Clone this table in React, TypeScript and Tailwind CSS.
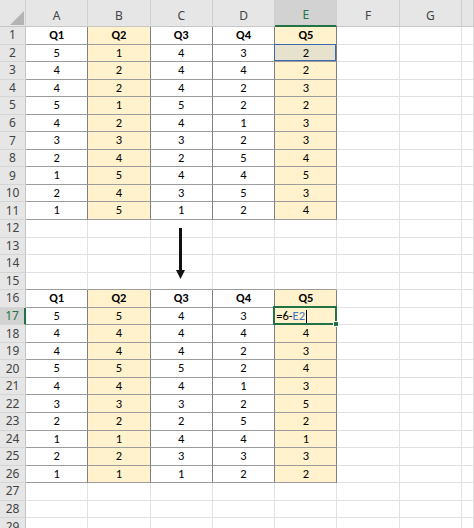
import React from 'react'

const cols = ['A', 'B', 'C', 'D', 'E', 'F', 'G', '']

// top table rows 1-11, bottom table rows 16-26
const top = [
    ['Q1', 'Q2', 'Q3', 'Q4', 'Q5'],
    ['5', '1', '4', '3', '2'],
    ['4', '2', '4', '4', '2'],
    ['4', '2', '4', '2', '3'],
    ['5', '1', '5', '2', '2'],
    ['4', '2', '4', '1', '3'],
    ['3', '3', '3', '2', '3'],
    ['2', '4', '2', '5', '4'],
    ['1', '5', '4', '4', '5'],
    ['2', '4', '3', '5', '3'],
    ['1', '5', '1', '2', '4'],
]

const bottom = [
    ['Q1', 'Q2', 'Q3', 'Q4', 'Q5'],
    ['5', '5', '4', '3', ''],
    ['4', '4', '4', '4', '4'],
    ['4', '4', '4', '2', '3'],
    ['5', '5', '5', '2', '4'],
    ['4', '4', '4', '1', '3'],
    ['3', '3', '3', '2', '5'],
    ['2', '2', '2', '5', '2'],
    ['1', '1', '4', '4', '1'],
    ['2', '2', '3', '3', '3'],
    ['1', '1', '1', '2', '2'],
]

const inTable = (r: number, c: number) =>
    c <= 4 && ((r >= 1 && r <= 11) || (r >= 16 && r <= 26))

const valueAt = (r: number, c: number) => {
    if (c > 4) return ''
    if (r >= 1 && r <= 11) return top[r - 1][c]
    if (r >= 16 && r <= 26) return bottom[r - 16][c]
    return ''
}

const gridCols = 'grid grid-cols-[26px_repeat(7,62.3px)_1fr] grid-rows-[100%]'

const Cell = ({ r, c }: { r: number; c: number }) => {
    const t = inTable(r, c)
    const right = t ? 'border-r-[#808080]' : 'border-r-[#e1e1e1]'
    const below = t || inTable(r + 1, c) ? 'border-b-[#9c9c9c]' : 'border-b-[#e1e1e1]'
    const fill = t && (c === 1 || c === 4) ? 'bg-[#fff2cc]' : 'bg-white'
    const bold = r === 1 || r === 16 ? 'font-bold' : ''
    const isE2 = r === 2 && c === 4
    const isE17 = r === 17 && c === 4

    return (
        <div
            className={`relative min-h-0 flex items-center justify-center border-r border-b ${right} ${below} ${isE2 ? 'bg-[#e7e2ce]' : fill} ${bold} text-[12.5px] leading-none text-black`}
        >
            {isE17 ? (
                <span className="absolute left-px top-0 bottom-0 flex items-center">
                    <span>=6-</span>
                    <span className="text-[#4472c4]">E2</span>
                    <span className="ml-px w-px h-[13px] bg-black" />
                </span>
            ) : (
                <span>{valueAt(r, c)}</span>
            )}
            {isE2 && (
                <div className="absolute -left-px -top-px right-0 bottom-0 border border-[#3e68ad] z-10" />
            )}
            {isE17 && (
                <>
                    <div className="absolute -left-[2px] -top-[2px] -right-px -bottom-px border-2 border-[#217346] z-10" />
                    <div className="absolute -right-[3px] -bottom-[3px] w-[6px] h-[6px] bg-[#217346] border border-white z-20" />
                </>
            )}
        </div>
    )
}

const RowHeader = ({ r }: { r: number }) => {
    const active = r === 17
    return (
        <div
            className={`min-h-0 flex items-center justify-center border-b border-b-[#d5d5d5] ${active ? 'bg-[#d2d2d2] border-r-2 border-r-[#217346] text-[#217346]' : 'bg-[#e6e6e6] border-r border-r-[#c6c6c6] text-[#444]'} text-[12px] leading-none font-['Segoe_UI','Noto_Sans',sans-serif]`}
        >
            {r}
        </div>
    )
}

const App = () => {
    const rows = Array.from({ length: 29 }, (_, i) => i + 1)

    return (
        <div className="relative w-[474px] h-[528px] overflow-hidden bg-white font-['Carlito','Calibri','Liberation_Sans',sans-serif]">
            {/* column headers */}
            <div className={`${gridCols} h-[27px] bg-[#e6e6e6]`}>
                <div className="relative border-r border-r-[#cfcfcf] border-b border-b-[#c6c6c6]">
                    <svg className="absolute inset-0" width="26" height="27" viewBox="0 0 26 27">
                        <polygon points="24,11 24,25 10,25" fill="#b4b4b4" />
                    </svg>
                </div>
                {cols.map((name, c) => {
                    const active = c === 4
                    return (
                        <div
                            key={c}
                            className={`flex items-end justify-center pb-[4px] text-[12px] leading-none font-['Segoe_UI','Noto_Sans',sans-serif] border-r border-r-[#cfcfcf] ${active ? 'bg-[#d2d2d2] border-b-2 border-b-[#217346] text-[#217346]' : 'border-b border-b-[#c6c6c6] text-[#444]'}`}
                        >
                            {name}
                        </div>
                    )
                })}
            </div>

            {/* body */}
            {rows.map((r) => (
                <div key={r} className={`${gridCols} h-[17.56px]`}>
                    <RowHeader r={r} />
                    {cols.map((_, c) => (
                        <Cell key={c} r={r} c={c} />
                    ))}
                </div>
            ))}

            {/* arrow drawn over the sheet */}
            <svg className="absolute left-[175px] top-[227px] z-30" width="11" height="54" viewBox="0 0 11 54">
                <line x1="5.5" y1="1" x2="5.5" y2="45" stroke="#111" strokeWidth="3" />
                <polygon points="1,43 10,43 5.5,52" fill="#111" />
            </svg>
        </div>
    )
}

export default App
